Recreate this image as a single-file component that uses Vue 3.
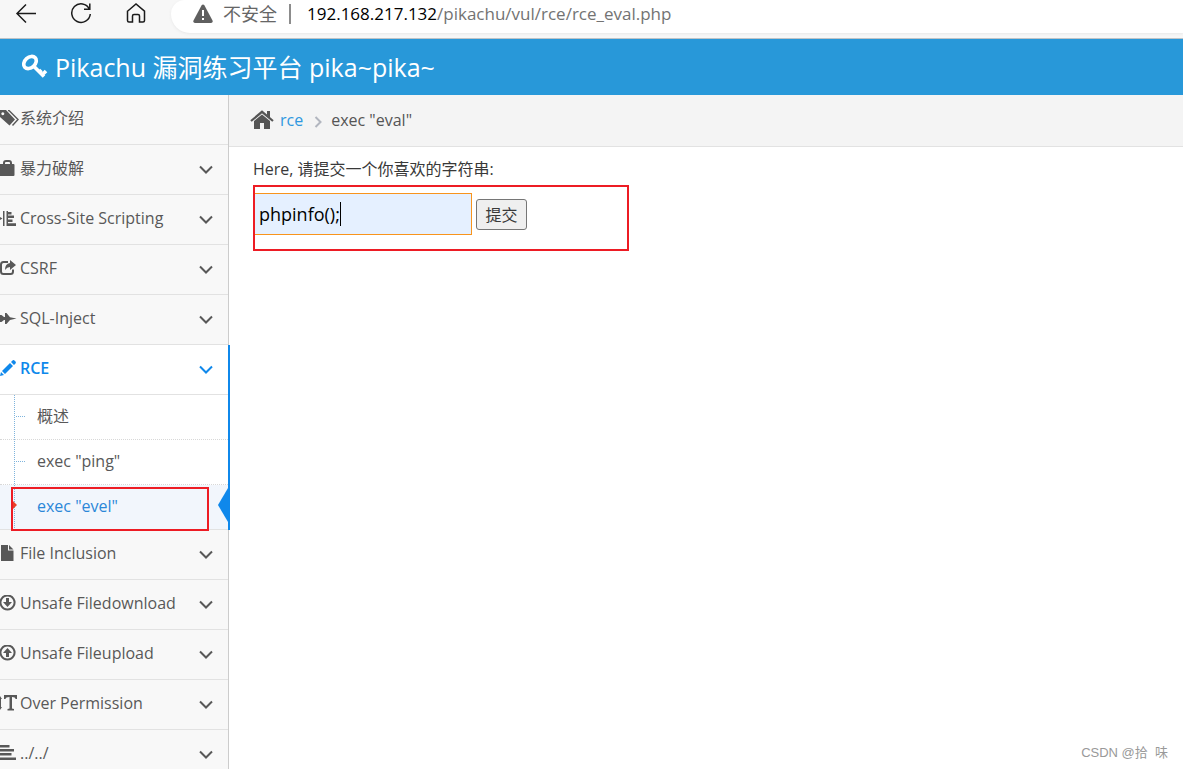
<template>
  <div class="page">
    <header class="browser">
      <div class="browser-buttons">
        <button type="button" aria-label="Back">
          <svg width="22" height="22" viewBox="0 0 22 22">
            <path d="M21 11.5H2M11 2.5L2 11.5L11 20.5" />
          </svg>
        </button>
        <button type="button" aria-label="Refresh">
          <svg width="22" height="22" viewBox="0 0 22 22">
            <path d="M19.4 7A9.3 9.3 0 1 0 20.3 12M19.8 1.5V7.2H14" />
          </svg>
        </button>
        <button type="button" aria-label="Home">
          <svg width="22" height="22" viewBox="0 0 22 22">
            <path
              d="M2.5 9.2L11 2L19.5 9.2V18.5Q19.5 20 18 20H14.5V14Q14.5 12.5 13 12.5H9Q7.5 12.5 7.5 14V20H4Q2.5 20 2.5 18.5Z"
            />
          </svg>
        </button>
      </div>
      <div class="address">
        <svg class="warning" width="22" height="20" viewBox="0 0 22 20">
          <path
            d="M9.5 1.5Q11 -0.5 12.5 1.5L20.5 16.5Q21.2 19 19 19H3Q0.8 19 1.5 16.5Z"
            fill="#5f5f5f"
          />
          <path d="M11 6V12M11 14V16" stroke="#fff" stroke-width="2" />
        </svg>
        <span class="insecure">不安全</span>
        <span class="divider"></span>
        <span class="url"><b>192.168.217.132</b>/pikachu/vul/rce/rce_eval.php</span>
      </div>
    </header>

    <nav class="navbar">
      <a href="#" class="brand">
        <svg width="26" height="26" viewBox="0 0 26 26">
          <ellipse cx="8" cy="8.5" rx="7" ry="5.2" transform="rotate(-42 8 8.5)" />
          <path d="M11.5 12L22 22.5M16.5 19L19.5 16M20.5 20.5L24 17" />
        </svg>
        <span>Pikachu 漏洞练习平台 pika~pika~</span>
      </a>
    </nav>

    <div class="main">
      <aside class="sidebar">
        <ul class="menu">
          <li v-for="item in menu" :key="item.title" :class="{ active: item.children }">
            <a href="#" class="menu-link">
              <svg class="menu-icon" width="20" height="20" viewBox="0 0 20 20">
                <path v-if="item.fill" :d="item.fill" fill="currentColor" fill-rule="evenodd" />
                <path
                  v-if="item.line"
                  :d="item.line"
                  fill="none"
                  stroke="currentColor"
                  :stroke-width="item.weight || 2"
                />
              </svg>
              <span class="menu-text">{{ item.title }}</span>
              <svg v-if="!item.single" class="arrow" width="14" height="10" viewBox="0 0 14 10">
                <path d="M1 1.5L7 7.5L13 1.5" />
              </svg>
            </a>
            <ul v-if="item.children" class="submenu">
              <li
                v-for="child in item.children"
                :key="child"
                :class="{ current: child === current }"
              >
                <a href="#" @click.prevent="current = child">{{ child }}</a>
                <span v-if="child === current" class="mark"></span>
              </li>
            </ul>
          </li>
        </ul>
      </aside>

      <main class="content">
        <div class="breadcrumbs">
          <svg width="24" height="20" viewBox="0 0 24 20">
            <path d="M1 11L12 1.8L23 11" fill="none" stroke="currentColor" stroke-width="2.2" />
            <path d="M17 1H20V8L17 5ZM4 11L12 4.5L20 11V19H14V13H10V19H4Z" fill="currentColor" />
          </svg>
          <a href="#">rce</a>
          <svg class="crumb-arrow" width="8" height="12" viewBox="0 0 8 12">
            <path d="M1.5 1L6.5 6L1.5 11" />
          </svg>
          <span>exec "eval"</span>
        </div>
        <form class="eval-form" @submit.prevent>
          <label for="txt">Here, 请提交一个你喜欢的字符串:</label>
          <div class="fields">
            <div class="text-box">
              <input id="txt" v-model="txt" type="text" name="txt" />
              <span class="caret"></span>
            </div>
            <button type="submit">提交</button>
          </div>
        </form>
      </main>
    </div>

    <span class="watermark">CSDN @拾&nbsp; 味</span>
  </div>
</template>

<script setup>
import { ref } from "vue";

const txt = ref("phpinfo();");
const current = ref('exec "evel"');

const menu = [
  {
    title: "系统介绍",
    single: true,
    fill: "M0 0H6L15 9.5L9.5 15.5L0 7ZM2.8 2.3A1.5 1.5 0 1 0 2.81 2.3Z",
    line: "M8 0.5H9L18 9.5L12.5 15.5",
    weight: 1.4,
  },
  {
    title: "暴力破解",
    fill: "M1 4H13.5Q14.5 4 14.5 5V15Q14.5 16 13.5 16H0V4Z",
    line: "M4 5V3Q4 1 6 1H9Q11 1 11 3V5",
  },
  {
    title: "Cross-Site Scripting",
    fill: "M3 1H4.5V16H3ZM0 7L2.5 8.5L0 10ZM6.5 1H8V16H6.5ZM8 2H11.5V4.5H8ZM8 5.5H14V8H8ZM8 9.5H12.5V12H8ZM8 13.3H16V16H8Z",
  },
  {
    title: "CSRF",
    fill: "M10 0L16 5L10 10V7Q7 7 5 10Q5 3.5 10 3Z",
    line: "M8 2H3.5Q1 2 1 4.5V11.5Q1 14 3.5 14H10.5Q13 14 13 11.5V9.5",
  },
  {
    title: "SQL-Inject",
    fill: "M0 5H1.5L4 7H5L5 3H6.5L10 7.2L16.5 8.5L10 10L6.5 14H5V10H4L1.5 12H0Z",
  },
  {
    title: "RCE",
    fill: "M12.5 0.5Q13.5 -0.5 15 1Q16.5 2.5 15.5 3.5L14 5L11 2ZM10 3L13 6L5 14L2 11ZM1 12L4 15L0 16Z",
    children: ["概述", 'exec "ping"', 'exec "evel"'],
  },
  {
    title: "File Inclusion",
    fill: "M1 0H8V5.5H13.5V16H1ZM9 0L13.5 4.5H9Z",
  },
  {
    title: "Unsafe Filedownload",
    fill: "M6 3H9V7H12L7.5 12L3 7H6Z",
    line: "M7.5 0.5A7 7 0 1 0 7.51 0.5Z",
  },
  {
    title: "Unsafe Fileupload",
    fill: "M6 12H9V8H12L7.5 3L3 8H6Z",
    line: "M7.5 0.5A7 7 0 1 0 7.51 0.5Z",
  },
  {
    title: "Over Permission",
    fill: "M4 0H17V4H15.5Q15.5 2 12 2V13.5L14 14V15.5H7.5V14L9.5 13.5V2Q5.5 2 5.5 4H4ZM0 1L2 4H1V12H2L0 15Z",
  },
  {
    title: "../../",
    fill: "M0 0H9.5V2.5H0ZM0 4H14V6.5H0ZM0 8H11.5V10.5H0ZM0 12.5H16V15H0Z",
  },
];
</script>

<style>
body {
  margin: 0;
}
</style>

<style scoped>
.page {
  position: relative;
  display: flex;
  flex-direction: column;
  height: 100vh;
  overflow: hidden;
  background: #fff;
  color: #393939;
  font-family: "Open Sans", "Noto Sans CJK SC", sans-serif;
  font-size: 16px;
  line-height: 24px;
}

a {
  color: inherit;
  text-decoration: none;
}

ul {
  list-style: none;
  margin: 0;
  padding: 0;
}

.browser {
  display: flex;
  flex: none;
  height: 38px;
  background: #f7f7f7;
  border-bottom: 1px solid #bdc3c7;
}

.browser-buttons {
  display: flex;
  flex: none;
  gap: 33px;
  width: 156px;
  height: 26px;
  padding: 2px 0 0 15px;
}

.browser-buttons button {
  display: flex;
  padding: 0;
  border: 0;
  background: none;
}

.browser-buttons svg {
  fill: none;
  stroke: #1b1b1b;
  stroke-width: 1.5;
}

.address {
  display: flex;
  flex: 1;
  align-items: center;
  height: 28px;
  padding: 0 0 5px 21px;
  background: #fff;
  border-radius: 14px 0 0 19px;
  box-shadow: 0 1px 3px #e8e8e8;
  font-size: 18px;
  white-space: nowrap;
}

.insecure {
  margin-left: 9px;
  color: #666;
}

.divider {
  width: 2px;
  height: 20px;
  margin: 0 16px 0 12px;
  background: #8c8c8c;
}

.url {
  color: #737373;
  font-size: 17px;
}

.url b {
  color: #000;
  font-weight: 400;
}

.navbar {
  display: flex;
  flex: none;
  align-items: center;
  height: 56px;
  padding-left: 22px;
  background: #2898d9;
}

.brand {
  display: flex;
  align-items: center;
  gap: 7px;
  color: #fff;
  font-size: 25px;
  line-height: 40px;
  white-space: nowrap;
}

.brand svg {
  fill: none;
  stroke: #fff;
  stroke-width: 3.6;
}

.main {
  display: flex;
  flex: 1;
  min-height: 0;
}

.sidebar {
  flex: none;
  width: 228px;
  background: #f8f8f8;
  border-right: 1px solid #ccc;
}

.menu > li {
  position: relative;
  color: #585858;
}

.menu-link {
  display: flex;
  align-items: flex-start;
  height: 49px;
  padding-right: 15px;
  border-bottom: 1px solid #e2e2e2;
}

.menu-icon {
  flex: none;
  margin-top: 15px;
}

.menu-text {
  flex: 1;
  line-height: 46px;
  white-space: nowrap;
}

.arrow {
  align-self: center;
  fill: none;
  stroke: currentColor;
  stroke-width: 2;
}

.active .menu-link {
  background: #fff;
  color: #0f88eb;
  font-weight: 600;
}

/* blue edge beside the open group */
.active::after {
  content: "";
  position: absolute;
  top: 0;
  right: -2px;
  bottom: 0;
  width: 2px;
  background: #0f88eb;
}

.submenu {
  position: relative;
  background: #fff;
}

.submenu::before {
  content: "";
  position: absolute;
  z-index: 1;
  top: 0;
  bottom: 0;
  left: 14px;
  border-left: 1px dotted #7fb4dc;
}

.submenu li {
  position: relative;
  height: 44px;
  border-bottom: 1px dotted #d8d8d8;
}

.submenu li::before {
  content: "";
  position: absolute;
  top: 21px;
  left: 16px;
  width: 9px;
  border-top: 1px dotted #7fb4dc;
}

.submenu a {
  display: block;
  padding-left: 37px;
  line-height: 43px;
}

.submenu .current {
  background: #f2f6fc;
  border-bottom: 1px solid #e2e2e2;
  color: #2b87d8;
}

.submenu .current::before {
  z-index: 2;
  top: 16px;
  left: 13px;
  width: 0;
  border: 4px solid transparent;
  border-left-color: #e8402a;
  border-right: 0;
}

.current::after {
  content: "";
  position: absolute;
  top: 3px;
  right: 0;
  border: 17px solid transparent;
  border-right: 10px solid #0f88eb;
  border-left: 0;
}

.mark {
  position: absolute;
  z-index: 1;
  top: 2px;
  right: 19px;
  bottom: -2px;
  left: 11px;
  border: 2px solid #ed1c24;
}

.content {
  flex: 1;
  min-width: 0;
}

.breadcrumbs {
  display: flex;
  align-items: center;
  height: 49px;
  padding: 0 0 2px 21px;
  background: #f4f4f4;
  border-bottom: 1px solid #e2e2e2;
  color: #555;
}

.breadcrumbs a {
  margin-left: 6px;
  color: #2f98e0;
}

.crumb-arrow {
  margin: 4px 9px 0 11px;
  fill: none;
  stroke: #b2b6bf;
  stroke-width: 2;
}

.eval-form {
  padding: 10px 24px;
}

.eval-form label {
  display: block;
}

.fields {
  display: flex;
  align-items: center;
  gap: 4px;
  box-sizing: border-box;
  max-width: 376px;
  height: 66px;
  margin-top: 4px;
  padding-bottom: 8px;
  border: 2px solid #ed1c24;
}

.text-box {
  position: relative;
}

.text-box input {
  display: block;
  box-sizing: border-box;
  width: 217px;
  height: 42px;
  padding: 4px;
  border: 1px solid #f8941d;
  border-left: 0;
  border-radius: 0;
  outline: none;
  background: #e5f0ff;
  color: #000;
  font: 18px "Open Sans", sans-serif;
}

.caret {
  position: absolute;
  top: 9px;
  left: 85px;
  width: 1px;
  height: 24px;
  background: #000;
}

.fields button {
  width: 51px;
  height: 31px;
  padding: 0;
  border: 1px solid #767676;
  border-radius: 3px;
  background: #efefef;
  color: #393939;
  font: 16px "Open Sans", "Noto Sans CJK SC", sans-serif;
}

.watermark {
  position: absolute;
  right: 15px;
  bottom: 6px;
  color: #999;
  font: 13px/20px "Liberation Sans", "Noto Sans CJK SC", sans-serif;
}
</style>
